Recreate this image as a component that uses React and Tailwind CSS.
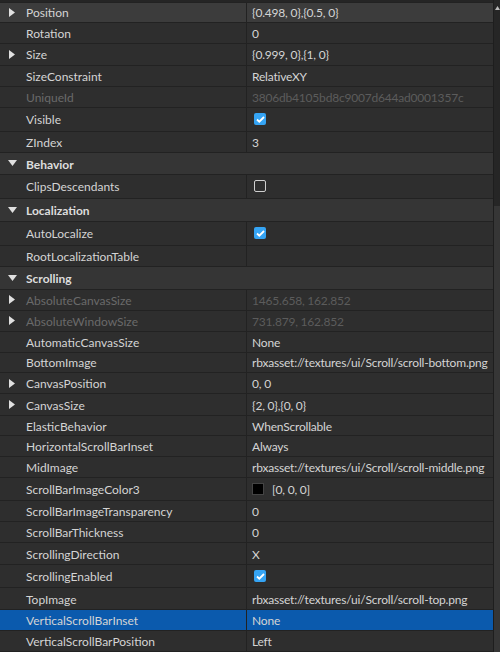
import React from "react";

const rows = [
  { name: "Position", value: "{0.498, 0},{0.5, 0}", arrow: true, h: 20, hover: true },
  { name: "Rotation", value: "0", h: 21 },
  { name: "Size", value: "{0.999, 0},{1, 0}", arrow: true, h: 22 },
  { name: "SizeConstraint", value: "RelativeXY", h: 21 },
  { name: "UniqueId", value: "3806db4105bd8c9007d644ad0001357c", h: 21, disabled: true },
  { name: "Visible", check: true, h: 24 },
  { name: "ZIndex", value: "3", h: 21 },
  { header: "Behavior", h: 22 },
  { name: "ClipsDescendants", check: false, h: 24 },
  { header: "Localization", h: 23 },
  { name: "AutoLocalize", check: true, h: 24 },
  { name: "RootLocalizationTable", value: "", h: 21 },
  { header: "Scrolling", h: 23 },
  { name: "AbsoluteCanvasSize", value: "1465.658, 162.852", arrow: true, h: 21, disabled: true },
  { name: "AbsoluteWindowSize", value: "731.879, 162.852", arrow: true, h: 21, disabled: true },
  { name: "AutomaticCanvasSize", value: "None", h: 21 },
  { name: "BottomImage", value: "rbxasset://textures/ui/Scroll/scroll-bottom.png", h: 21 },
  { name: "CanvasPosition", value: "0, 0", arrow: true, h: 21 },
  { name: "CanvasSize", value: "{2, 0},{0, 0}", arrow: true, h: 22 },
  { name: "ElasticBehavior", value: "WhenScrollable", h: 20 },
  { name: "HorizontalScrollBarInset", value: "Always", h: 21 },
  { name: "MidImage", value: "rbxasset://textures/ui/Scroll/scroll-middle.png", h: 21 },
  { name: "ScrollBarImageColor3", value: "[0, 0, 0]", swatch: true, h: 23 },
  { name: "ScrollBarImageTransparency", value: "0", h: 21 },
  { name: "ScrollBarThickness", value: "0", h: 21 },
  { name: "ScrollingDirection", value: "X", h: 22 },
  { name: "ScrollingEnabled", check: true, h: 23 },
  { name: "TopImage", value: "rbxasset://textures/ui/Scroll/scroll-top.png", h: 22 },
  { name: "VerticalScrollBarInset", value: "None", h: 21, selected: true },
  { name: "VerticalScrollBarPosition", value: "Left", h: 21 },
];

function Arrow({ down }) {
  return down ? (
    <svg width="9" height="6" viewBox="0 0 9 6">
      <path d="M0 0h9L4.5 6z" fill="#e0e0e0" />
    </svg>
  ) : (
    <svg width="6" height="9" viewBox="0 0 6 9">
      <path d="M0 0v9l6-4.5z" fill="#e0e0e0" />
    </svg>
  );
}

function Checkbox({ on }) {
  if (!on)
    return <div className="w-[12px] h-[12px] rounded-[2px] border border-[#cfcfcf]" />;
  return (
    <div className="w-[12px] h-[12px] rounded-[2px] bg-[#35a4f4] flex items-center justify-center">
      <svg width="9" height="7" viewBox="0 0 9 7">
        <path d="M1 3.5l2.3 2.2L8 1" stroke="white" strokeWidth="1.8" fill="none" />
      </svg>
    </div>
  );
}

function Row({ r }) {
  if (r.header) {
    return (
      <div
        className="flex items-center bg-[#353535] border-b border-[#222222] text-[#dddddd] font-bold"
        style={{ height: r.h }}
      >
        <div className="w-[26px] pl-[8px] flex items-center">
          <Arrow down />
        </div>
        <span className="pt-[3px]">{r.header}</span>
      </div>
    );
  }
  const bg = r.selected ? "bg-[#0b5aad]" : r.hover ? "bg-[#3c3c3c]" : "bg-[#2e2e2e]";
  const txt = r.disabled ? "text-[#6a6a6a]" : "text-[#d4d4d4]";
  return (
    <div className={`flex border-b border-[#222222] ${bg}`} style={{ height: r.h }}>
      <div className={`w-[246px] flex items-center ${txt}`}>
        <div className="w-[26px] pl-[9px] flex items-center">{r.arrow && <Arrow />}</div>
        <span className="pt-[2px]">{r.name}</span>
      </div>
      <div className="w-px bg-[#222222]" />
      <div className={`flex-1 flex items-center pl-[5px] tracking-[-0.2px] whitespace-nowrap overflow-hidden ${r.disabled ? "text-[#5c5c5c]" : "text-[#d4d4d4]"}`}>
        {r.check !== undefined ? (
          <div className="pl-[2px]">
            <Checkbox on={r.check} />
          </div>
        ) : r.swatch ? (
          <div className="flex items-center gap-[8px]">
            <div className="w-[12px] h-[12px] bg-black border border-[#444444]" />
            <span className="pt-[2px]">{r.value}</span>
          </div>
        ) : (
          <span className="pt-[2px]">{r.value}</span>
        )}
      </div>
    </div>
  );
}

export default function App() {
  return (
    <div
      className="w-[500px] h-[652px] overflow-hidden bg-[#2e2e2e] flex text-[12px] leading-none"
      style={{ fontFamily: 'Lato, "Noto Sans", sans-serif' }}
    >
      <div className="w-[493px] flex flex-col">
        <div className="h-[3px] bg-[#252525] shrink-0 border-b border-[#222222]" />
        {rows.map((r, i) => (
          <Row key={i} r={r} />
        ))}
      </div>
      <div className="w-[7px] flex flex-col bg-[#262626] border-l border-[#1e1e1e]">
        <div className="h-[12px] flex items-center justify-center pt-[4px]">
          <svg width="5" height="4" viewBox="0 0 5 4">
            <path d="M0 4L2.5 0 5 4z" fill="#bbbbbb" />
          </svg>
        </div>
        <div className="h-[194px]" />
        <div className="flex-1 bg-[#363636]" />
      </div>
    </div>
  );
}
